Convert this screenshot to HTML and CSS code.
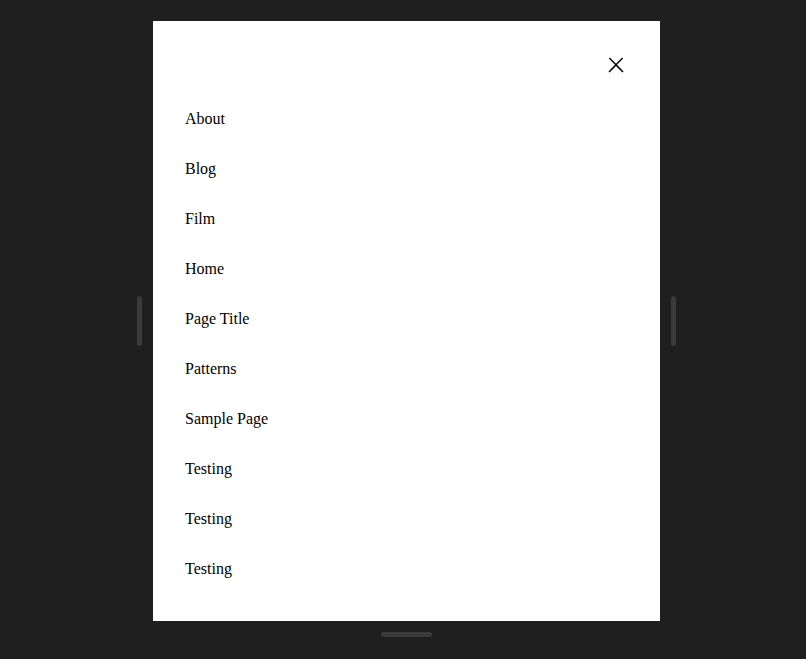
FILE: index.html
```html
<!DOCTYPE html>
<html lang="en">
<head>
<meta charset="utf-8">
<title>Menu</title>
<link rel="stylesheet" href="styles.css">
</head>
<body>
<div class="frame">
  <div class="row">
    <div class="handle handle-v"></div>
    <div class="panel">
      <div class="panel-top">
        <button class="close" aria-label="Close menu">
          <svg width="24" height="24" viewBox="0 0 24 24"><path d="M13 11.8l6.1-6.3-1-1-6.1 6.2-6.1-6.2-1 1 6.1 6.3-6.5 6.7 1 1 6.5-6.6 6.5 6.6 1-1z"/></svg>
        </button>
      </div>
      <ul class="menu">
        <li>About</li>
        <li>Blog</li>
        <li>Film</li>
        <li>Home</li>
        <li>Page Title</li>
        <li>Patterns</li>
        <li>Sample Page</li>
        <li>Testing</li>
        <li>Testing</li>
        <li>Testing</li>
      </ul>
    </div>
    <div class="handle handle-v"></div>
  </div>
  <div class="handle handle-h"></div>
</div>
</body>
</html>
```
FILE: styles.css
```css
html, body {
  margin: 0;
  padding: 0;
  background: #1f1f1f;
  height: 100%;
}
body {
  padding-top: 21px;
  padding-left: 137px;
  box-sizing: border-box;
}
.frame {
  display: inline-flex;
  flex-direction: column;
  align-items: center;
}
.row {
  display: flex;
  align-items: center;
  gap: 11px;
}
.handle {
  background: #3a3a3a;
  border-radius: 3px;
}
.handle-v {
  width: 5px;
  height: 50px;
}
.handle-h {
  width: 51px;
  height: 5px;
  margin-top: 11px;
}
.panel {
  width: 507px;
  height: 600px;
  background: #fff;
  box-sizing: border-box;
  padding: 32px 32px 0 32px;
  font-family: "Liberation Serif", "Times New Roman", serif;
  font-size: 16px;
  color: #000;
}
.panel-top {
  display: flex;
  justify-content: flex-end;
}
.close {
  width: 24px;
  height: 24px;
  padding: 0;
  border: 0;
  background: none;
  display: flex;
}
.close svg {
  fill: #000;
}
.menu {
  list-style: none;
  margin: 17px 0 0 0;
  padding: 0;
}
.menu li {
  line-height: 50px;
  height: 50px;
}
```
